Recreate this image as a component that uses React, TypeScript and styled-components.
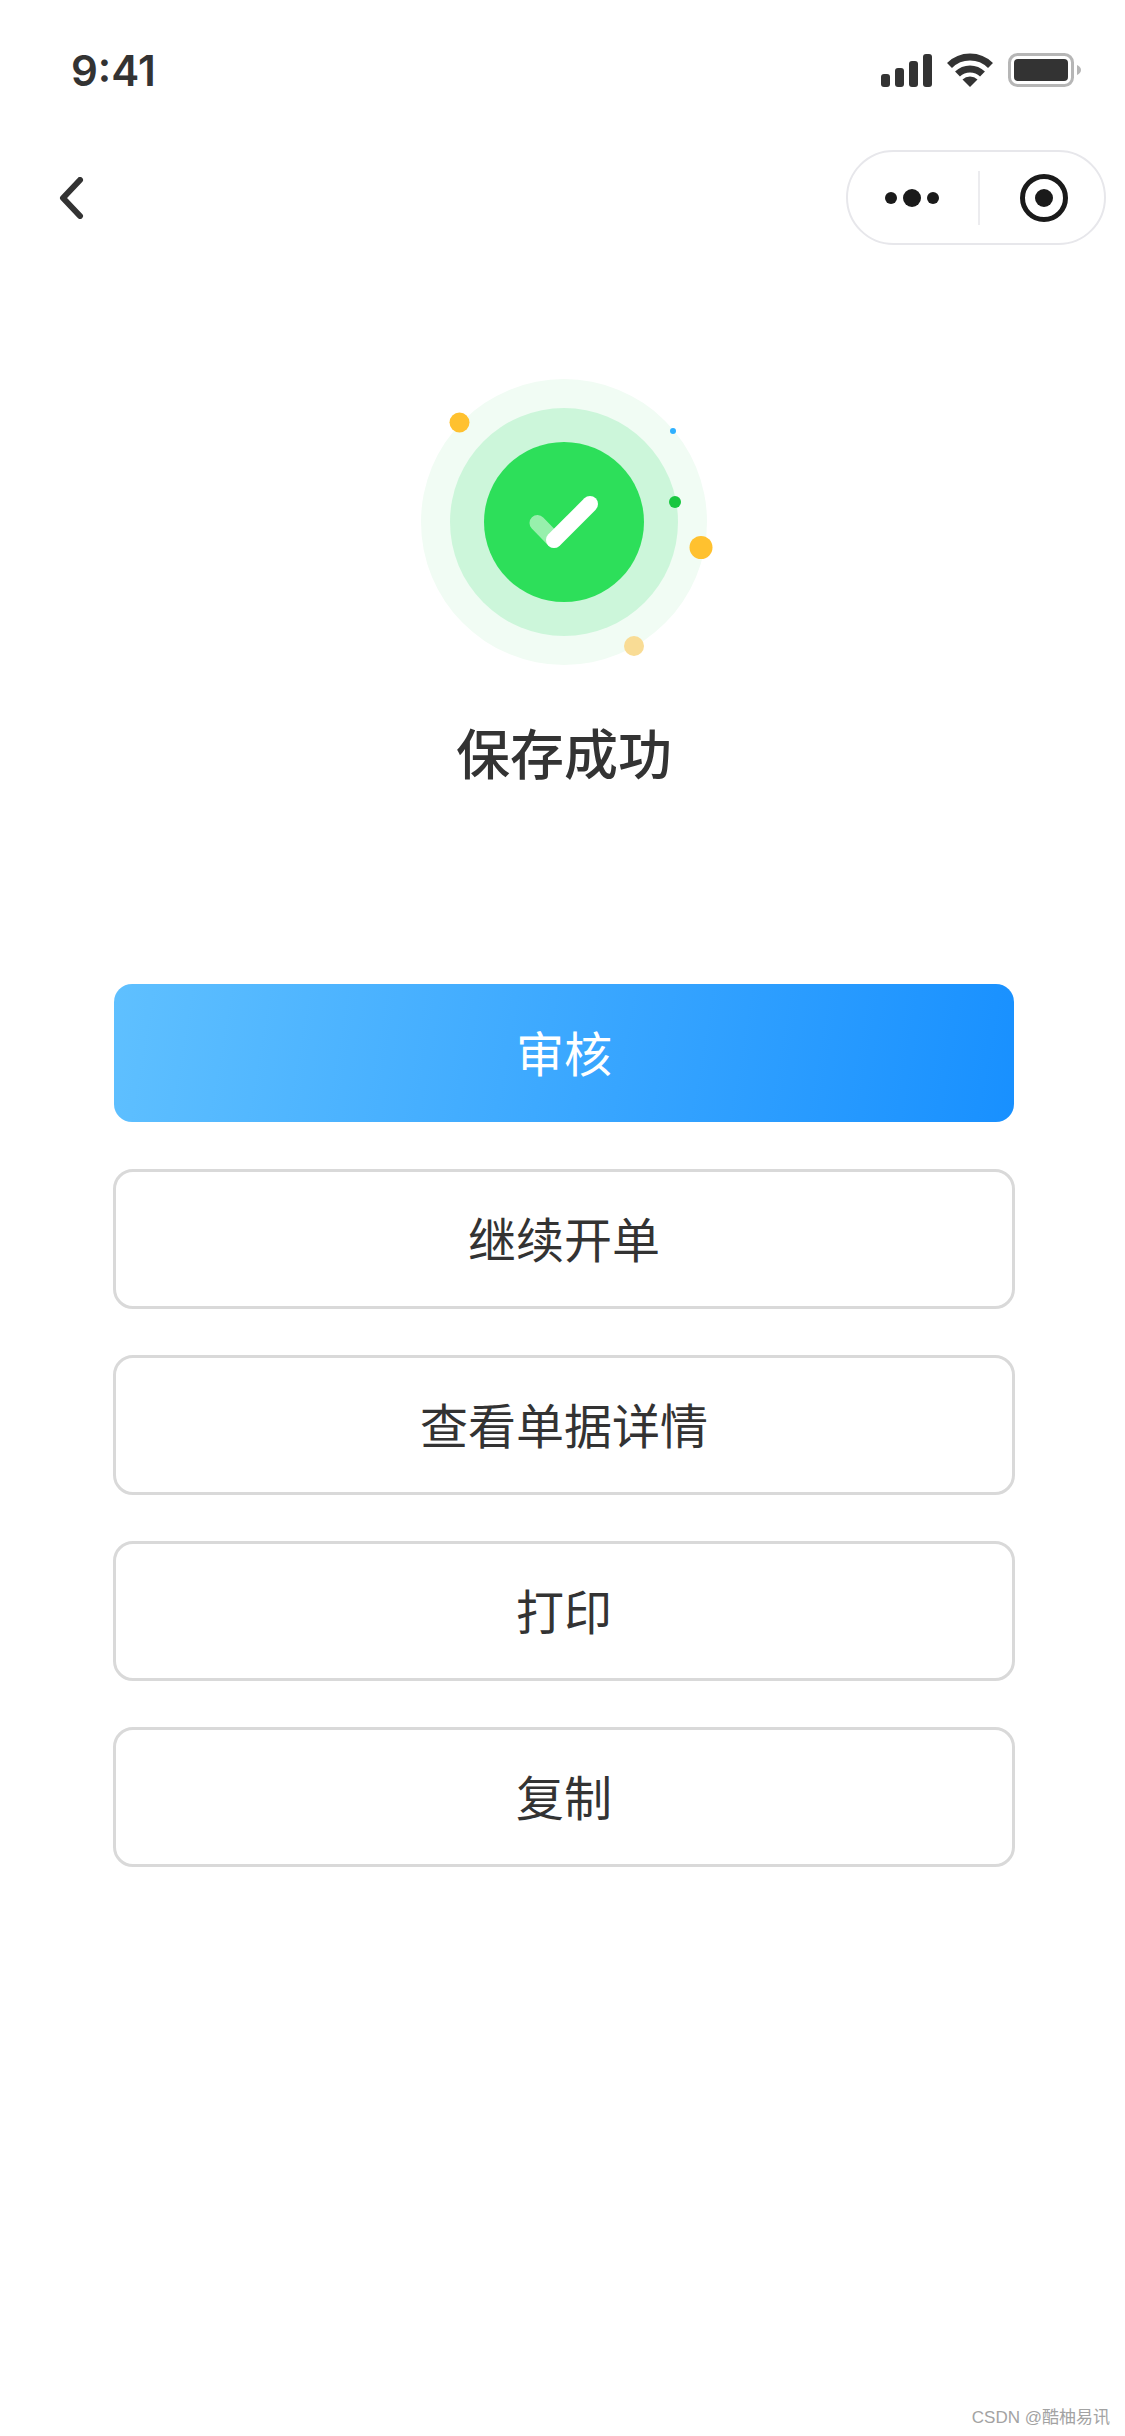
import React from 'react'
import styled, { createGlobalStyle } from 'styled-components'

const GlobalStyle = createGlobalStyle`
  html, body {
    margin: 0;
    padding: 0;
    background: #fff;
  }
`

const Page = styled.div`
  position: relative;
  width: 1125px;
  height: 2436px;
  overflow: hidden;
  background: #fff;
  color: #333;
  font-family: 'Noto Sans CJK SC', 'Noto Sans', sans-serif;
`

const StatusBar = styled.div`
  display: flex;
  align-items: center;
  justify-content: space-between;
  height: 140px;
  padding: 0 44px 0 71px;
  box-sizing: border-box;
`

const Time = styled.span`
  font-family: Inter, 'Liberation Sans', sans-serif;
  font-size: 42px;
  font-weight: 600;
  color: #333;
`

const StatusIcons = styled.div`
  display: flex;
  align-items: center;
  gap: 15px;
`

const NavBar = styled.div`
  display: flex;
  align-items: center;
  justify-content: space-between;
  height: 115px;
  padding: 0 19px 0 58px;
  box-sizing: border-box;
`

const Capsule = styled.div`
  display: flex;
  align-items: center;
  width: 260px;
  height: 95px;
  box-sizing: border-box;
  border: 2px solid #e7e7eb;
  border-radius: 48px;
`

const MoreCell = styled.div`
  display: flex;
  justify-content: center;
  box-sizing: border-box;
  width: 130px;
  padding-right: 2px;
`

const TargetCell = styled.div`
  flex: 1;
  display: flex;
  justify-content: center;
  padding-left: 4px;
`

const CapsuleDivider = styled.div`
  width: 2px;
  height: 54px;
  background: #ececef;
`

const Hero = styled.div`
  display: flex;
  flex-direction: column;
  align-items: center;
  margin-top: 107px;
  padding-left: 3px;
`

const Title = styled.h1`
  margin: 33px 0 3px;
  font-size: 54px;
  line-height: 74px;
  font-weight: 500;
  color: #333;
`

const Actions = styled.div`
  display: flex;
  flex-direction: column;
  gap: 46px;
  padding: 192px 110px 0 113px;
`

const ActionButton = styled.div<{ $primary?: boolean }>`
  display: flex;
  align-items: center;
  justify-content: center;
  box-sizing: border-box;
  height: ${({ $primary }) => ($primary ? 138 : 140)}px;
  margin: ${({ $primary }) => ($primary ? '0 1px 1px' : '0')};
  padding-bottom: 5px;
  border-radius: ${({ $primary }) => ($primary ? 18 : 20)}px;
  font-size: 48px;
  font-weight: 400;
  border: ${({ $primary }) => ($primary ? 'none' : '3px solid #d9d9d9')};
  color: ${({ $primary }) => ($primary ? '#fff' : '#333')};
  background: ${({ $primary }) => ($primary ? 'linear-gradient(100deg, #5fc0ff 0%, #1890ff 100%)' : '#fff')};
`

const Watermark = styled.span`
  position: absolute;
  right: 15px;
  bottom: 6px;
  font-family: 'Liberation Sans', 'Noto Sans CJK SC', sans-serif;
  font-size: 17px;
  line-height: 24px;
  color: #a3a3a3;
`

function SignalIcon() {
  return (
    <svg width="51" height="33" viewBox="0 0 51 33">
      <rect x="0" y="20" width="9" height="13" rx="3" fill="#333" />
      <rect x="14" y="14" width="9" height="19" rx="3" fill="#333" />
      <rect x="28" y="7" width="9" height="26" rx="3" fill="#333" />
      <rect x="42" y="0" width="9" height="33" rx="3" fill="#333" />
    </svg>
  )
}

function WifiIcon() {
  return (
    <svg width="46" height="34" viewBox="0 0 46 34">
      <path d="M2.5 12.5 A29 29 0 0 1 43.5 12.5" fill="none" stroke="#333" strokeWidth="7" />
      <path d="M10.5 21 A18 18 0 0 1 35.5 21" fill="none" stroke="#333" strokeWidth="7" />
      <path d="M23 34 L15.5 26.5 A11 11 0 0 1 30.5 26.5 Z" fill="#333" />
    </svg>
  )
}

function BatteryIcon() {
  return (
    <svg width="73" height="34" viewBox="0 0 73 34">
      <rect x="1.5" y="1.5" width="63" height="31" rx="8" fill="none" stroke="#b6b6b6" strokeWidth="3" />
      <rect x="6" y="6" width="54" height="22" rx="4" fill="#333" />
      <path d="M69 12 Q73 14 73 17 Q73 20 69 22 Z" fill="#b6b6b6" />
    </svg>
  )
}

function BackIcon() {
  return (
    <svg width="26" height="42" viewBox="0 0 26 42">
      <path d="M22 3 L5 21 L22 39" fill="none" stroke="#333" strokeWidth="6" strokeLinecap="round" strokeLinejoin="round" />
    </svg>
  )
}

function MoreIcon() {
  return (
    <svg width="54" height="18" viewBox="0 0 54 18">
      <circle cx="6" cy="9" r="6" fill="#1a1a1a" />
      <circle cx="27" cy="9" r="9" fill="#1a1a1a" />
      <circle cx="48" cy="9" r="6" fill="#1a1a1a" />
    </svg>
  )
}

function TargetIcon() {
  return (
    <svg width="48" height="48" viewBox="0 0 48 48">
      <circle cx="24" cy="24" r="21.5" fill="none" stroke="#1a1a1a" strokeWidth="5" />
      <circle cx="24" cy="24" r="9" fill="#1a1a1a" />
    </svg>
  )
}

function SuccessBadge() {
  return (
    <svg width="320" height="320" viewBox="0 0 320 320">
      <circle cx="160" cy="160" r="143" fill="#f1fcf4" />
      <circle cx="160" cy="160" r="114" fill="#ccf6da" />
      <circle cx="160" cy="160" r="80" fill="#2ddf5a" />
      <path d="M133.500 161 L150 178" stroke="#97f0ac" strokeWidth="16" strokeLinecap="round" />
      <path d="M150 178 L186 142" stroke="#fff" strokeWidth="16" strokeLinecap="round" />
      <circle cx="55.500" cy="60.500" r="10" fill="#ffc12f" />
      <circle cx="269" cy="69" r="3" fill="#2fb0ff" />
      <circle cx="271" cy="140" r="6" fill="#17c73f" />
      <circle cx="297" cy="185.500" r="11.500" fill="#ffc12f" />
      <circle cx="230" cy="284" r="10" fill="#f9dc95" />
    </svg>
  )
}

const actions = ['继续开单', '查看单据详情', '打印', '复制']

export default function App() {
  return (
    <Page>
      <GlobalStyle />
      <StatusBar>
        <Time>9:41</Time>
        <StatusIcons>
          <SignalIcon />
          <WifiIcon />
          <BatteryIcon />
        </StatusIcons>
      </StatusBar>
      <NavBar>
        <BackIcon />
        <Capsule>
          <MoreCell>
            <MoreIcon />
          </MoreCell>
          <CapsuleDivider />
          <TargetCell>
            <TargetIcon />
          </TargetCell>
        </Capsule>
      </NavBar>
      <Hero>
        <SuccessBadge />
        <Title>保存成功</Title>
      </Hero>
      <Actions>
        <ActionButton $primary>审核</ActionButton>
        {actions.map(label => (
          <ActionButton key={label}>{label}</ActionButton>
        ))}
      </Actions>
      <Watermark>CSDN @酷柚易讯</Watermark>
    </Page>
  )
}
